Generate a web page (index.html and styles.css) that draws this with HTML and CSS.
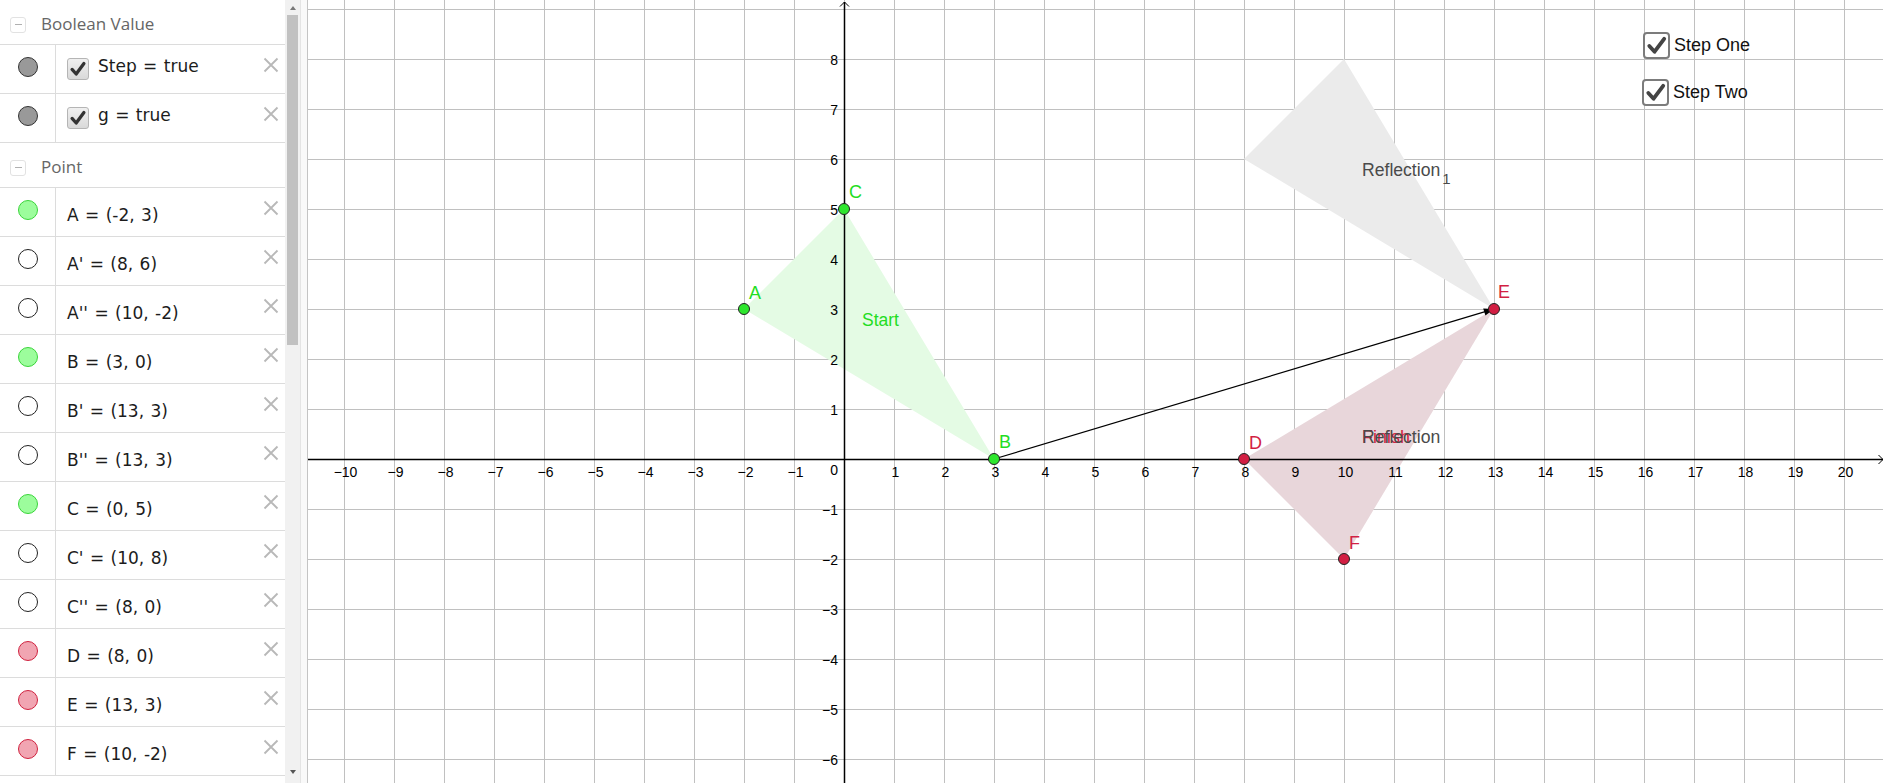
FILE: index.html
```html
<!DOCTYPE html>
<html lang="en">
<head>
<meta charset="utf-8">
<title>Reflections</title>
<link rel="stylesheet" href="styles.css">
</head>
<body>
<div class="app">
  <aside class="algebra">
    <div class="alg-list">
      <section class="group">
        <div class="group-head"><span class="collapse"></span><span class="group-title">Boolean Value</span></div>
        <div class="item">
          <div class="marker"><span class="dot dot-gray"></span></div>
          <div class="item-body bool">
            <span class="cb"><svg viewBox="0 0 22 22" width="20" height="20"><path d="M4.5 11.5 L9 16.5 L17.5 5" fill="none" stroke="#333" stroke-width="3.6" stroke-linecap="round" stroke-linejoin="round"/></svg></span>
            <span class="expr">Step = true</span>
          </div>
          <span class="del"><svg viewBox="0 0 16 16" width="16" height="16"><path d="M1.5 1.5 L14.5 14.5 M14.5 1.5 L1.5 14.5" stroke="#b8b8b8" stroke-width="1.8"/></svg></span>
        </div>
        <div class="item">
          <div class="marker"><span class="dot dot-gray"></span></div>
          <div class="item-body bool">
            <span class="cb"><svg viewBox="0 0 22 22" width="20" height="20"><path d="M4.5 11.5 L9 16.5 L17.5 5" fill="none" stroke="#333" stroke-width="3.6" stroke-linecap="round" stroke-linejoin="round"/></svg></span>
            <span class="expr">g = true</span>
          </div>
          <span class="del"><svg viewBox="0 0 16 16" width="16" height="16"><path d="M1.5 1.5 L14.5 14.5 M14.5 1.5 L1.5 14.5" stroke="#b8b8b8" stroke-width="1.8"/></svg></span>
        </div>
      </section>
      <section class="group">
        <div class="group-head"><span class="collapse"></span><span class="group-title">Point</span></div>
        <div class="item"><div class="marker"><span class="dot dot-green"></span></div><div class="item-body"><span class="expr">A = (-2, 3)</span></div><span class="del"><svg viewBox="0 0 16 16" width="16" height="16"><path d="M1.5 1.5 L14.5 14.5 M14.5 1.5 L1.5 14.5" stroke="#b8b8b8" stroke-width="1.8"/></svg></span></div>
        <div class="item"><div class="marker"><span class="dot dot-open"></span></div><div class="item-body"><span class="expr">A' = (8, 6)</span></div><span class="del"><svg viewBox="0 0 16 16" width="16" height="16"><path d="M1.5 1.5 L14.5 14.5 M14.5 1.5 L1.5 14.5" stroke="#b8b8b8" stroke-width="1.8"/></svg></span></div>
        <div class="item"><div class="marker"><span class="dot dot-open"></span></div><div class="item-body"><span class="expr">A'' = (10, -2)</span></div><span class="del"><svg viewBox="0 0 16 16" width="16" height="16"><path d="M1.5 1.5 L14.5 14.5 M14.5 1.5 L1.5 14.5" stroke="#b8b8b8" stroke-width="1.8"/></svg></span></div>
        <div class="item"><div class="marker"><span class="dot dot-green"></span></div><div class="item-body"><span class="expr">B = (3, 0)</span></div><span class="del"><svg viewBox="0 0 16 16" width="16" height="16"><path d="M1.5 1.5 L14.5 14.5 M14.5 1.5 L1.5 14.5" stroke="#b8b8b8" stroke-width="1.8"/></svg></span></div>
        <div class="item"><div class="marker"><span class="dot dot-open"></span></div><div class="item-body"><span class="expr">B' = (13, 3)</span></div><span class="del"><svg viewBox="0 0 16 16" width="16" height="16"><path d="M1.5 1.5 L14.5 14.5 M14.5 1.5 L1.5 14.5" stroke="#b8b8b8" stroke-width="1.8"/></svg></span></div>
        <div class="item"><div class="marker"><span class="dot dot-open"></span></div><div class="item-body"><span class="expr">B'' = (13, 3)</span></div><span class="del"><svg viewBox="0 0 16 16" width="16" height="16"><path d="M1.5 1.5 L14.5 14.5 M14.5 1.5 L1.5 14.5" stroke="#b8b8b8" stroke-width="1.8"/></svg></span></div>
        <div class="item"><div class="marker"><span class="dot dot-green"></span></div><div class="item-body"><span class="expr">C = (0, 5)</span></div><span class="del"><svg viewBox="0 0 16 16" width="16" height="16"><path d="M1.5 1.5 L14.5 14.5 M14.5 1.5 L1.5 14.5" stroke="#b8b8b8" stroke-width="1.8"/></svg></span></div>
        <div class="item"><div class="marker"><span class="dot dot-open"></span></div><div class="item-body"><span class="expr">C' = (10, 8)</span></div><span class="del"><svg viewBox="0 0 16 16" width="16" height="16"><path d="M1.5 1.5 L14.5 14.5 M14.5 1.5 L1.5 14.5" stroke="#b8b8b8" stroke-width="1.8"/></svg></span></div>
        <div class="item"><div class="marker"><span class="dot dot-open"></span></div><div class="item-body"><span class="expr">C'' = (8, 0)</span></div><span class="del"><svg viewBox="0 0 16 16" width="16" height="16"><path d="M1.5 1.5 L14.5 14.5 M14.5 1.5 L1.5 14.5" stroke="#b8b8b8" stroke-width="1.8"/></svg></span></div>
        <div class="item"><div class="marker"><span class="dot dot-red"></span></div><div class="item-body"><span class="expr">D = (8, 0)</span></div><span class="del"><svg viewBox="0 0 16 16" width="16" height="16"><path d="M1.5 1.5 L14.5 14.5 M14.5 1.5 L1.5 14.5" stroke="#b8b8b8" stroke-width="1.8"/></svg></span></div>
        <div class="item"><div class="marker"><span class="dot dot-red"></span></div><div class="item-body"><span class="expr">E = (13, 3)</span></div><span class="del"><svg viewBox="0 0 16 16" width="16" height="16"><path d="M1.5 1.5 L14.5 14.5 M14.5 1.5 L1.5 14.5" stroke="#b8b8b8" stroke-width="1.8"/></svg></span></div>
        <div class="item"><div class="marker"><span class="dot dot-red"></span></div><div class="item-body"><span class="expr">F = (10, -2)</span></div><span class="del"><svg viewBox="0 0 16 16" width="16" height="16"><path d="M1.5 1.5 L14.5 14.5 M14.5 1.5 L1.5 14.5" stroke="#b8b8b8" stroke-width="1.8"/></svg></span></div>
      </section>
    </div>
    <div class="scrollbar">
      <span class="sb-btn"><span class="arrow-up"></span></span>
      <span class="thumb"></span>
      <span class="sb-fill"></span>
      <span class="sb-btn sb-bottom"><span class="arrow-down"></span></span>
    </div>
  </aside>
  <div class="splitter"></div>
  <main class="graphics">
    <svg class="plane" viewBox="308 0 1575 783" width="1575" height="783">
      <defs>
        <pattern id="grid" x="344" y="9" width="50" height="50" patternUnits="userSpaceOnUse">
          <path d="M0 0.5H50M0.5 0V50" fill="none" stroke="#c0c0c0" stroke-width="1"/>
        </pattern>
      </defs>
      <rect x="308" y="0" width="1575" height="783" fill="url(#grid)"/>

      <!-- polygons -->
      <polygon points="744,309 844,209 994,459" fill="#e4fbe4"/>
      <polygon points="1244,159 1344,59 1494,309" fill="#ebebeb"/>
      <polygon points="1244,459 1494,309 1344,559" fill="#e8d6da"/>

      <!-- axes -->
      <g stroke="#000" fill="none">
        <line x1="308" y1="459.5" x2="1883" y2="459.5" stroke-width="1.5"/>
        <line x1="844.5" y1="2" x2="844.5" y2="783" stroke-width="1.5"/>
        <path d="M840 6.5 L844.5 2 L849 6.5" stroke-width="1"/>
        <path d="M1878.5 455 L1883 459.5 L1878.5 464" stroke-width="1"/>
      </g>

      <!-- x axis labels -->
      <g class="ticks" text-anchor="middle">
        <text x="345.5" y="477">−10</text>
        <text x="395.5" y="477">−9</text>
        <text x="445.5" y="477">−8</text>
        <text x="495.5" y="477">−7</text>
        <text x="545.5" y="477">−6</text>
        <text x="595.5" y="477">−5</text>
        <text x="645.5" y="477">−4</text>
        <text x="695.5" y="477">−3</text>
        <text x="745.5" y="477">−2</text>
        <text x="795.5" y="477">−1</text>
        <text x="895.5" y="477">1</text>
        <text x="945.5" y="477">2</text>
        <text x="995.5" y="477">3</text>
        <text x="1045.5" y="477">4</text>
        <text x="1095.5" y="477">5</text>
        <text x="1145.5" y="477">6</text>
        <text x="1195.5" y="477">7</text>
        <text x="1245.5" y="477">8</text>
        <text x="1295.5" y="477">9</text>
        <text x="1345.5" y="477">10</text>
        <text x="1395.5" y="477">11</text>
        <text x="1445.5" y="477">12</text>
        <text x="1495.5" y="477">13</text>
        <text x="1545.5" y="477">14</text>
        <text x="1595.5" y="477">15</text>
        <text x="1645.5" y="477">16</text>
        <text x="1695.5" y="477">17</text>
        <text x="1745.5" y="477">18</text>
        <text x="1795.5" y="477">19</text>
        <text x="1845.5" y="477">20</text>
      </g>
      <!-- y axis labels -->
      <g class="ticks" text-anchor="end">
        <text x="838" y="64.5">8</text>
        <text x="838" y="114.5">7</text>
        <text x="838" y="164.5">6</text>
        <text x="838" y="214.5">5</text>
        <text x="838" y="264.5">4</text>
        <text x="838" y="314.5">3</text>
        <text x="838" y="364.5">2</text>
        <text x="838" y="414.5">1</text>
        <text x="838" y="475">0</text>
        <text x="838" y="514.5">−1</text>
        <text x="838" y="564.5">−2</text>
        <text x="838" y="614.5">−3</text>
        <text x="838" y="664.5">−4</text>
        <text x="838" y="714.5">−5</text>
        <text x="838" y="764.5">−6</text>
      </g>

      <!-- vector B to E -->
      <line x1="994" y1="459" x2="1486" y2="311.4" stroke="#000" stroke-width="1.2"/>
      <polygon points="1494,309 1483.2,308.4 1485.4,315.4" fill="#000"/>

      <!-- texts -->
      <text class="start" x="862" y="326">Start</text>
      <text class="finish" x="1362" y="443">Finish</text>
      <text class="refl" x="1362" y="443">Reflection</text>
      <text class="refl" x="1362" y="176">Reflection<tspan class="sub" dx="2" dy="8">1</tspan></text>

      <!-- points -->
      <g stroke="#222" stroke-width="1">
        <circle cx="744" cy="309" r="5.5" fill="#2ee62e"/>
        <circle cx="844" cy="209" r="5.5" fill="#2ee62e"/>
        <circle cx="994" cy="459" r="5.5" fill="#2ee62e"/>
        <circle cx="1244" cy="459" r="5.5" fill="#d21f43"/>
        <circle cx="1494" cy="309" r="5.5" fill="#d21f43"/>
        <circle cx="1344" cy="559" r="5.5" fill="#d21f43"/>
      </g>
      <g class="plabel green">
        <text x="749" y="299">A</text>
        <text x="849" y="198">C</text>
        <text x="999" y="448">B</text>
      </g>
      <g class="plabel red">
        <text x="1249" y="449">D</text>
        <text x="1498" y="298">E</text>
        <text x="1349" y="549">F</text>
      </g>
    </svg>

    <label class="ggb-check check-one">
      <span class="ggb-box"><svg viewBox="0 0 24 24" width="23" height="23"><path d="M4.5 12.5 L10 18.5 L20 5" fill="none" stroke="#444" stroke-width="4" stroke-linecap="round" stroke-linejoin="round"/></svg></span>
      <span class="ggb-text">Step One</span>
    </label>
    <label class="ggb-check check-two">
      <span class="ggb-box"><svg viewBox="0 0 24 24" width="23" height="23"><path d="M4.5 12.5 L10 18.5 L20 5" fill="none" stroke="#444" stroke-width="4" stroke-linecap="round" stroke-linejoin="round"/></svg></span>
      <span class="ggb-text">Step Two</span>
    </label>
  </main>
</div>
</body>
</html>
```
FILE: styles.css
```css
html, body {
  margin: 0;
  padding: 0;
  height: 100%;
  overflow: hidden;
  background: #fff;
}

body {
  font-family: "Open Sans", "Liberation Sans", sans-serif;
}

.app {
  display: flex;
  width: 1883px;
  height: 783px;
}

/* ---------- Algebra view ---------- */
.algebra {
  width: 300px;
  flex: none;
  display: flex;
  border-right: 1px solid #e4e4e4;
  background: #fff;
  overflow: hidden;
}

.alg-list {
  width: 285px;
  flex: none;
}

.group-head {
  height: 40px;
  padding-top: 4px;
  padding-left: 10px;
  display: flex;
  align-items: center;
  color: #666;
  font-size: 17px;
  line-height: 40px;
}

.collapse {
  width: 16px;
  height: 16px;
  box-sizing: border-box;
  border: 1px solid #e2e2e2;
  border-radius: 3px;
  margin-right: 15px;
  margin-top: 1px;
  display: flex;
  align-items: center;
  justify-content: center;
}

.collapse::before {
  content: "";
  width: 7px;
  height: 1px;
  background: #b0b0b0;
}

.item {
  display: flex;
  height: 48px;
  border-top: 1px solid #dcdcdc;
}

.group .item:last-child {
  border-bottom: 1px solid #dcdcdc;
}

.marker {
  width: 56px;
  flex: none;
  border-right: 1px solid #dcdcdc;
  display: flex;
  justify-content: center;
  align-items: flex-start;
  padding-top: 12px;
  box-sizing: border-box;
}

.dot {
  width: 20px;
  height: 20px;
  box-sizing: border-box;
  border-radius: 50%;
  border: 1px solid #222;
  background: #fff;
}

.dot-gray {
  background: #999;
  border-color: #333;
}

.dot-green {
  background: #9cfd9c;
  border-color: #3ad53a;
}

.dot-red {
  background: #f1a5b2;
  border-color: #d0223f;
}

.dot-open {
  background: #fff;
  border-color: #222;
}

.item-body {
  flex: 1;
  display: flex;
  align-items: flex-start;
  padding-left: 11px;
  padding-top: 17px;
  min-width: 0;
}

.item-body.bool {
  padding-top: 11px;
}

.cb {
  width: 22px;
  height: 22px;
  box-sizing: border-box;
  margin-top: 2px;
  margin-right: 9px;
  border: 1px solid #b5b5b5;
  border-radius: 3px;
  background: linear-gradient(#f0f0f0, #d9d9d9);
  display: flex;
  align-items: center;
  justify-content: center;
  flex: none;
}

.cb svg {
  display: block;
}

.expr {
  font-family: "DejaVu Sans", "Liberation Sans", sans-serif;
  font-size: 17px;
  line-height: 20px;
  color: #1c1c1c;
  white-space: pre;
  word-spacing: 1px;
}

.del {
  width: 16px;
  height: 16px;
  flex: none;
  margin: 12px 6px 0 0;
}

.del svg {
  display: block;
}

/* ---------- Scrollbar ---------- */
.scrollbar {
  width: 15px;
  flex: none;
  background: #f1f1f1;
  display: flex;
  flex-direction: column;
  align-items: center;
}

.sb-btn {
  height: 15px;
  width: 15px;
  flex: none;
  display: flex;
  align-items: center;
  justify-content: center;
}

.sb-bottom {
  height: 16px;
  margin-bottom: 3px;
}

.arrow-up {
  width: 0;
  height: 0;
  border-left: 3.5px solid transparent;
  border-right: 3.5px solid transparent;
  border-bottom: 4px solid #777;
}

.arrow-down {
  width: 0;
  height: 0;
  border-left: 3.5px solid transparent;
  border-right: 3.5px solid transparent;
  border-top: 4px solid #555;
}

.thumb {
  width: 11px;
  height: 330px;
  flex: none;
  background: #c1c1c1;
}

.sb-fill {
  flex: 1;
}

.splitter {
  width: 6px;
  flex: none;
  background: #f9f9f9;
}

/* ---------- Graphics view ---------- */
.graphics {
  flex: 1;
  position: relative;
  border-left: 1px solid #c4c4c4;
  background: #fff;
  overflow: hidden;
}

.plane {
  display: block;
}

.ticks text {
  font-family: "Liberation Sans", Arial, sans-serif;
  font-size: 14px;
  fill: #000;
}

.start {
  font-family: "Liberation Sans", Arial, sans-serif;
  font-size: 17.5px;
  fill: #22dd22;
}

.finish {
  font-family: "Liberation Sans", Arial, sans-serif;
  font-size: 18px;
  fill: #d21f43;
}

.refl {
  font-family: "Liberation Sans", Arial, sans-serif;
  font-size: 17.6px;
  fill: #4a4a4a;
}

.refl .sub {
  font-size: 15px;
}

.plabel text {
  font-family: "Liberation Sans", Arial, sans-serif;
  font-size: 18px;
}

.plabel.green text {
  fill: #22dd22;
}

.plabel.red text {
  fill: #d21f43;
}

.ggb-check {
  position: absolute;
  display: flex;
  align-items: center;
  gap: 4px;
  font-family: "Liberation Sans", Arial, sans-serif;
  font-size: 18px;
  color: #111;
}

.check-one {
  left: 1335px;
  top: 32px;
}

.check-two {
  left: 1334px;
  top: 79px;
}

.ggb-box {
  width: 27px;
  height: 27px;
  box-sizing: border-box;
  border: 2px solid #7c7c7c;
  border-radius: 4px;
  background: #fff;
  display: flex;
  align-items: center;
  justify-content: center;
}

.ggb-box svg {
  display: block;
}
```
